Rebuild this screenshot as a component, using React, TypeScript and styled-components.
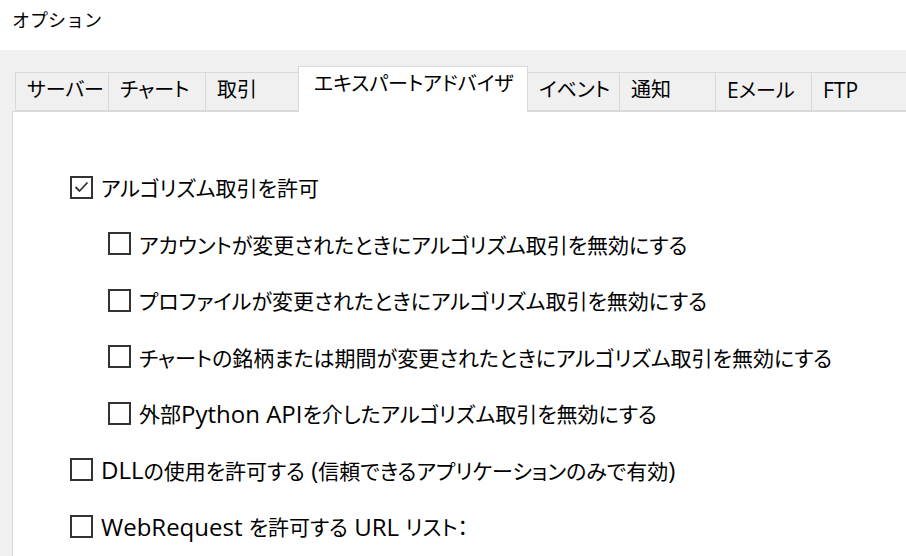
import React, { FC } from 'react'
import styled, { createGlobalStyle } from 'styled-components'

const GlobalStyle = createGlobalStyle`
  html, body {
    margin: 0;
    padding: 0;
    background: #fff;
  }
  body {
    font-family: 'Open Sans', 'Noto Sans CJK JP', sans-serif;
    color: #000;
  }
`

const Window = styled('div')`
  width: 906px;
  height: 556px;
  overflow: hidden;
  display: flex;
  flex-direction: column;
`

const TitleBar = styled('div')`
  height: 50px;
  box-sizing: border-box;
  padding: 6px 0 0 12px;
  font-size: 18px;
  line-height: 28px;
  background: #fff;
`

const DialogBody = styled('div')`
  flex: 1;
  background: #f0f0f0;
  padding: 16px 0 0 12px;
  display: flex;
  flex-direction: column;
`

const TabStrip = styled('ul')`
  display: flex;
  align-items: flex-end;
  height: 45px;
  margin: 0;
  padding: 0 0 0 3px;
  list-style: none;
  position: relative;
  z-index: 1;
`

const Tab = styled('li')<{ $width: number; $active?: boolean }>`
  box-sizing: border-box;
  flex: none;
  width: ${(p) => p.$width}px;
  height: ${(p) => (p.$active ? 46 : 39)}px;
  margin-right: -1px;
  margin-bottom: ${(p) => (p.$active ? -1 : 0)}px;
  padding: 5px 0 0 ${(p) => (p.$active ? 15 : 11)}px;
  border: 1px solid #d9d9d9;
  border-bottom: ${(p) => (p.$active ? 'none' : '1px solid #d9d9d9')};
  background: ${(p) => (p.$active ? '#fff' : '#f0f0f0')};
  font-size: 20px;
  line-height: 24px;
  font-feature-settings: 'palt';
  white-space: nowrap;
  position: relative;
  z-index: ${(p) => (p.$active ? 2 : 1)};
`

const Panel = styled('div')`
  flex: 1;
  background: #fff;
  border: 1px solid #d9d9d9;
  border-right: none;
  border-bottom: none;
  padding-top: 61px;
  display: flex;
  flex-direction: column;
  gap: 28.5px;
`

const OptionRow = styled('label')<{ $indent: number }>`
  display: flex;
  align-items: center;
  height: 28px;
  padding-left: ${(p) => 57 + p.$indent * 38}px;
  font-size: 21px;
  font-feature-settings: 'palt';
  white-space: pre;
`

const Latin = styled('span')<{ $size: number }>`
  font-size: ${(p) => p.$size}px;
  font-feature-settings: normal;
`

const Box = styled('span')`
  box-sizing: border-box;
  flex: none;
  width: 23px;
  height: 23px;
  margin-right: 8px;
  border: 2px solid #333;
  background: #fff;
  display: flex;
  align-items: center;
  justify-content: center;
`

const tabs = [
  { label: 'サーバー', width: 94 },
  { label: 'チャート', width: 98 },
  { label: '取引', width: 94 },
  { label: 'エキスパートアドバイザ', width: 230, active: true },
  { label: 'イベント', width: 93 },
  { label: '通知', width: 97 },
  { label: 'Eメール', width: 97 },
  { label: 'FTP', width: 120 },
]

const options = [
  { text: 'アルゴリズム取引を許可', indent: 0, checked: true },
  { text: 'アカウントが変更されたときにアルゴリズム取引を無効にする', indent: 1 },
  { text: 'プロファイルが変更されたときにアルゴリズム取引を無効にする', indent: 1 },
  { text: 'チャートの銘柄または期間が変更されたときにアルゴリズム取引を無効にする', indent: 1 },
  { text: '外部Python APIを介したアルゴリズム取引を無効にする', indent: 1 },
  { text: 'DLLの使用を許可する (信頼できるアプリケーションのみで有効)', indent: 0 },
  { text: 'WebRequest を許可する URL リスト：', indent: 0 },
]

// Latin runs are set larger than the Japanese text, as in the Windows UI font
const MixedText: FC<{ text: string; latinSize: number }> = ({ text, latinSize }) => (
  <>
    {text.split(/([\x20-\x7e]+)/).map((part, i) =>
      i % 2 === 1 ? (
        <Latin key={i} $size={latinSize}>
          {part}
        </Latin>
      ) : (
        part
      )
    )}
  </>
)

const Checkbox: FC<{ checked?: boolean }> = ({ checked }) => (
  <Box>
    {checked && (
      <svg width="15" height="12" viewBox="0 0 15 12">
        <polyline points="1.5,6 5.5,10 13.5,1.5" fill="none" stroke="#333" strokeWidth="1.8" />
      </svg>
    )}
  </Box>
)

const App: FC = () => (
  <>
    <GlobalStyle />
    <Window>
      <TitleBar>オプション</TitleBar>
      <DialogBody>
        <TabStrip>
          {tabs.map((t) => (
            <Tab key={t.label} $width={t.width} $active={t.active}>
              <MixedText text={t.label} latinSize={21} />
            </Tab>
          ))}
        </TabStrip>
        <Panel>
          {options.map((o) => (
            <OptionRow key={o.text} $indent={o.indent}>
              <Checkbox checked={o.checked} />
              <MixedText text={o.text} latinSize={24} />
            </OptionRow>
          ))}
        </Panel>
      </DialogBody>
    </Window>
  </>
)

export default App
